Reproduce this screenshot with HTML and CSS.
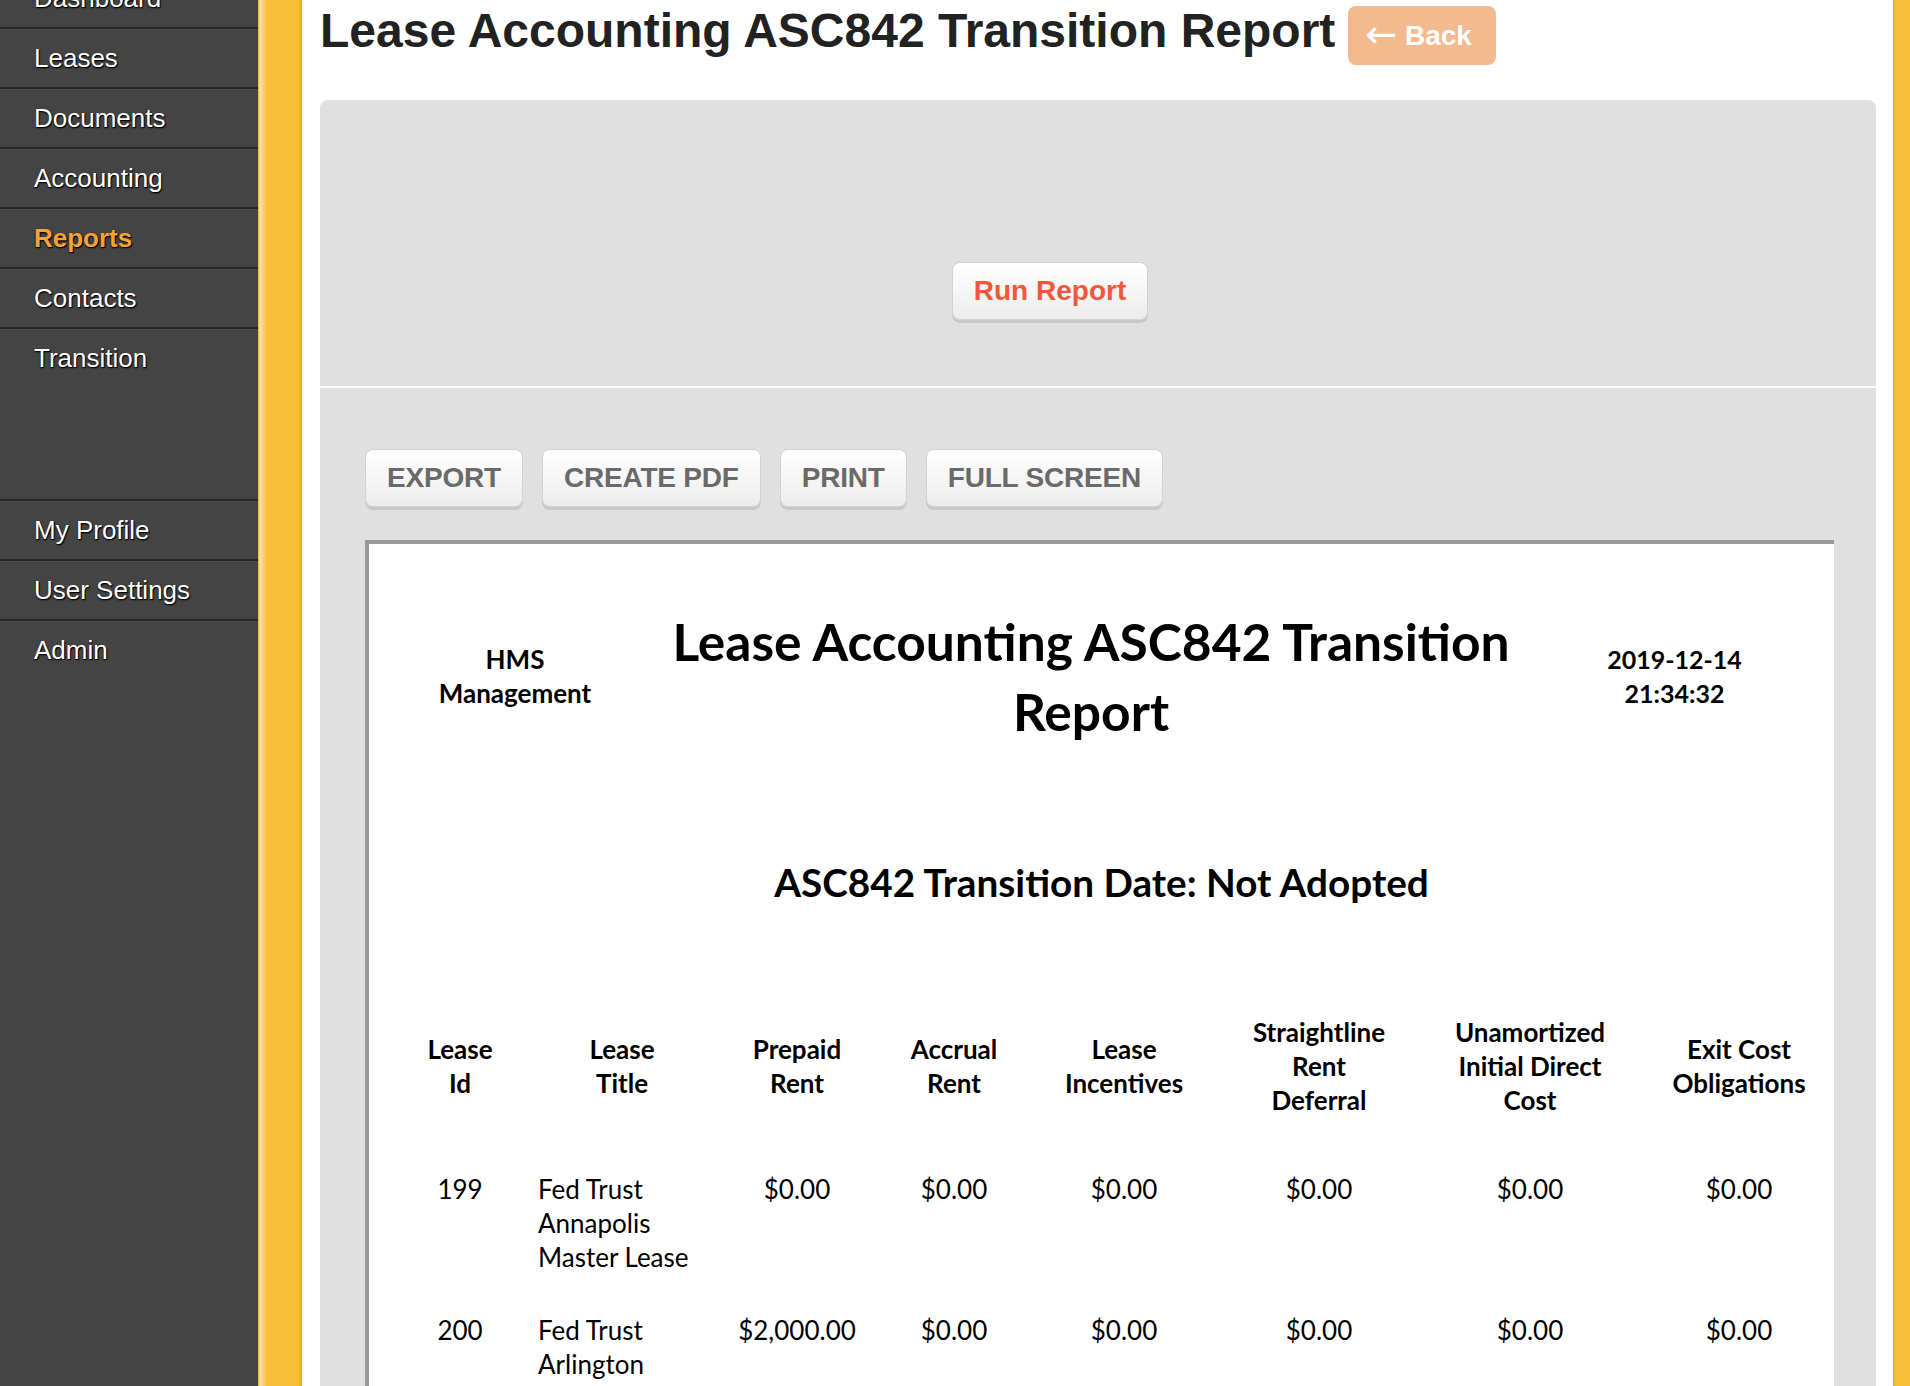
FILE: index.html
```html
<!DOCTYPE html>
<html lang="en">
<head>
<meta charset="utf-8">
<title>Lease Accounting ASC842 Transition Report</title>
<link rel="stylesheet" href="styles.css">
</head>
<body>
<div class="layout">
  <aside class="sidebar">
    <ul class="nav">
      <li>Dashboard</li>
      <li>Leases</li>
      <li>Documents</li>
      <li>Accounting</li>
      <li class="active">Reports</li>
      <li>Contacts</li>
      <li class="tall">Transition</li>
      <li>My Profile</li>
      <li>User Settings</li>
      <li class="last">Admin</li>
    </ul>
  </aside>
  <div class="rail"></div>
  <main class="main">
    <div class="page-head">
      <h1 class="page-title">Lease Accounting ASC842 Transition Report</h1>
      <a class="btn-back" href="#"><span class="arrow">&larr;</span> Back</a>
    </div>
    <section class="panel">
      <div class="panel-top">
        <button class="btn btn-run" type="button">Run Report</button>
      </div>
      <div class="panel-bottom">
        <div class="toolbar">
          <button class="btn" type="button">EXPORT</button>
          <button class="btn" type="button">CREATE PDF</button>
          <button class="btn" type="button">PRINT</button>
          <button class="btn" type="button">FULL SCREEN</button>
        </div>
        <div class="report-frame">
          <div class="report-head">
            <div class="rh-left">HMS Management</div>
            <div class="rh-title">Lease Accounting ASC842 Transition Report</div>
            <div class="rh-right">2019-12-14 21:34:32</div>
          </div>
          <div class="report-sub">ASC842 Transition Date: Not Adopted</div>
          <table class="report-table">
            <colgroup>
              <col class="c-id"><col class="c-title"><col class="c-prepaid"><col class="c-accrual">
              <col class="c-incent"><col class="c-straight"><col class="c-unam"><col class="c-exit">
            </colgroup>
            <thead>
              <tr>
                <th>Lease<br>Id</th>
                <th>Lease<br>Title</th>
                <th>Prepaid<br>Rent</th>
                <th>Accrual<br>Rent</th>
                <th>Lease<br>Incentives</th>
                <th>Straightline<br>Rent<br>Deferral</th>
                <th>Unamortized<br>Initial Direct<br>Cost</th>
                <th>Exit Cost<br>Obligations</th>
              </tr>
            </thead>
            <tbody>
              <tr>
                <td>199</td>
                <td class="t-left">Fed Trust Annapolis Master Lease</td>
                <td>$0.00</td><td>$0.00</td><td>$0.00</td><td>$0.00</td><td>$0.00</td><td>$0.00</td>
              </tr>
              <tr>
                <td>200</td>
                <td class="t-left">Fed Trust Arlington Master Lease</td>
                <td>$2,000.00</td><td>$0.00</td><td>$0.00</td><td>$0.00</td><td>$0.00</td><td>$0.00</td>
              </tr>
            </tbody>
          </table>
        </div>
      </div>
    </section>
  </main>
  <div class="rail-right"></div>
</div>
</body>
</html>
```
FILE: styles.css
```css
html, body {
  margin: 0;
  padding: 0;
  height: 100%;
  overflow: hidden;
}
body {
  font-family: "Liberation Sans", Arial, sans-serif;
  background: #fff;
  color: #222;
}
.layout {
  display: flex;
  height: 1386px;
}
.sidebar {
  width: 258px;
  flex: none;
  background: #444;
}
.nav {
  list-style: none;
  margin: -31px 0 0;
  padding: 0;
}
.nav li {
  height: 57px;
  line-height: 57px;
  border-top: 1px solid #4f4f4f;
  border-bottom: 2px solid #262626;
  padding-left: 34px;
  color: #fff;
  font-size: 26px;
  text-shadow: 1px 1px 1px #000, 0 1px 2px rgba(0, 0, 0, 0.7);
}
.nav li.active {
  color: #f7a137;
  font-weight: bold;
}
.nav li.tall {
  height: 169px;
}
.nav li.last {
  border-bottom: none;
}
.rail {
  width: 44px;
  flex: none;
  background: linear-gradient(90deg, #f0a928 0px, #fde3a2 2px, #fbd272 5px, #f9bf38 9px, #f9bf38 40px, #e8aa2e 44px);
}
.rail-right {
  width: 17px;
  flex: none;
  background: linear-gradient(90deg, #e6a92d 0px, #f9bf38 3px, #f9bf38 17px);
}
.main {
  flex: 1;
  min-width: 0;
  padding: 0 17px 0 18px;
  background: #fff;
}
.page-head {
  display: flex;
  align-items: flex-start;
  gap: 13px;
  height: 100px;
}
.page-title {
  margin: 2px 0 0;
  font-size: 48px;
  line-height: 58px;
  font-weight: bold;
  color: #222;
  white-space: nowrap;
}
.btn-back {
  margin-top: 6px;
  height: 59px;
  line-height: 59px;
  padding: 0 24px 0 17px;
  background: #f3b98f;
  color: #fff;
  border-radius: 8px;
  font-size: 28px;
  font-weight: bold;
  text-decoration: none;
  white-space: nowrap;
}
.btn-back .arrow {
  font-family: "DejaVu Sans", sans-serif;
  font-weight: normal;
  font-size: 38px;
  line-height: 57px;
  vertical-align: top;
}
.panel {
  background: #e0e0e0;
  border-radius: 8px 8px 0 0;
  height: 1286px;
}
.panel-top {
  box-sizing: border-box;
  height: 288px;
  border-bottom: 2px solid #fff;
  display: flex;
  justify-content: center;
  align-items: flex-start;
  padding: 162px 96px 0 0;
}
.btn {
  font-family: "Liberation Sans", Arial, sans-serif;
  font-size: 28px;
  font-weight: bold;
  height: 58px;
  line-height: 56px;
  padding: 0 21px;
  border: 1px solid #d2d2d2;
  border-radius: 8px;
  background: linear-gradient(#ffffff, #ececec);
  box-shadow: 0 3px 0 #c8c8c8;
  color: #6a6a6a;
  cursor: pointer;
}
.toolbar .btn {
  letter-spacing: -0.2px;
}
.btn-run {
  color: #ef583a;
}
.panel-bottom {
  padding: 61px 42px 0 45px;
}
.toolbar {
  display: flex;
  gap: 19px;
  margin-bottom: 33px;
}
.report-frame {
  background: #fff;
  border-top: 4px solid #999;
  border-left: 4px solid #999;
  height: 900px;
  color: #000;
  font-family: Lato, "Open Sans", sans-serif;
}
.report-head {
  display: grid;
  grid-template-columns: 292px 860px 1fr;
  align-items: center;
  padding-top: 62px;
  text-align: center;
  font-weight: bold;
}
.rh-left, .rh-right {
  font-size: 26px;
  line-height: 34px;
  justify-self: center;
}
.rh-left {
  width: 180px;
}
.rh-right {
  width: 160px;
  margin-left: -6px;
  font-size: 25px;
}
.rh-title {
  font-size: 51.5px;
  line-height: 70px;
  justify-self: center;
}
.report-sub {
  margin-top: 110px;
  text-align: center;
  font-weight: bold;
  font-size: 38.7px;
  line-height: 52px;
}
.report-table {
  margin: 107px 0 0 21px;
  width: 1446px;
  table-layout: fixed;
  border-collapse: collapse;
}
.c-id { width: 140px; }
.c-title { width: 184px; }
.c-prepaid { width: 166px; }
.c-accrual { width: 148px; }
.c-incent { width: 192px; }
.c-straight { width: 198px; }
.c-unam { width: 224px; }
.c-exit { width: 194px; }
.report-table th {
  font-size: 26px;
  line-height: 34px;
  font-weight: bold;
  text-align: center;
  vertical-align: middle;
  padding: 0 8px 36px;
}
.report-table td {
  font-size: 26px;
  line-height: 34px;
  text-align: center;
  vertical-align: top;
  padding: 19px 8px 20px;
}
.report-table td.t-left {
  text-align: left;
}
```
